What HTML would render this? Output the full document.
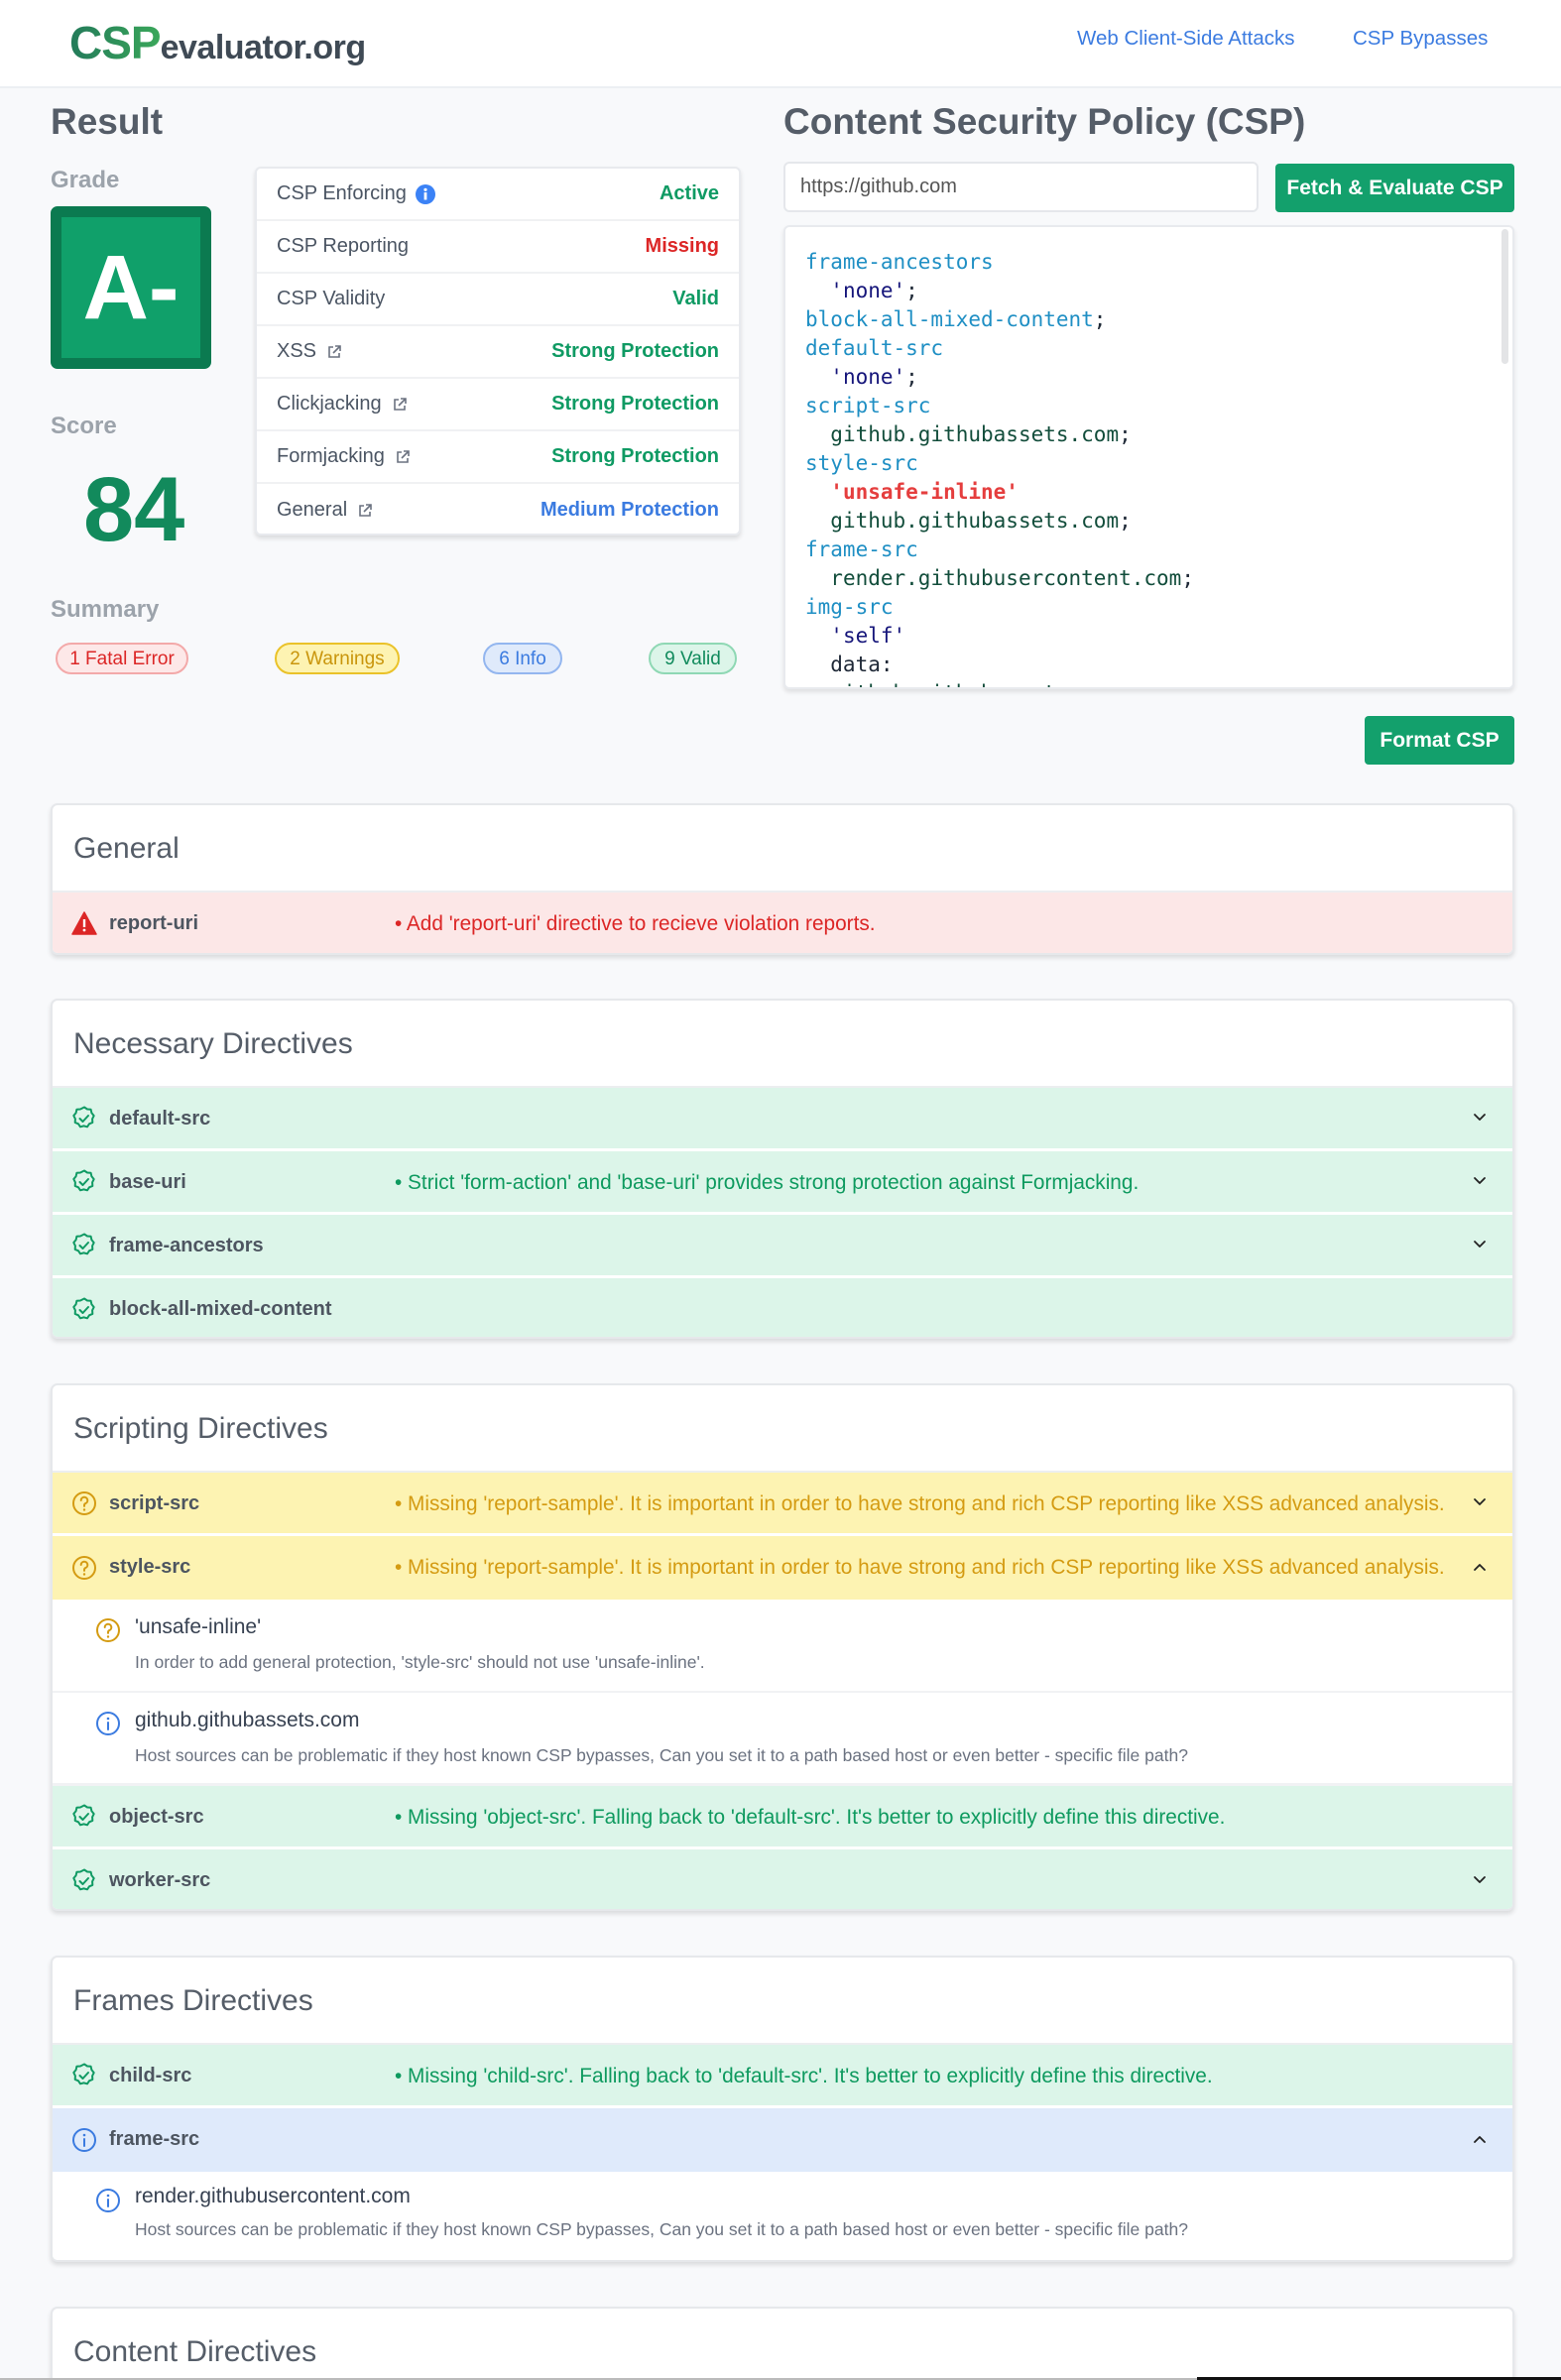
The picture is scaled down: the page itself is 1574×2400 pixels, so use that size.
<!DOCTYPE html>
<html style="height:2400px;overflow:hidden"><head><meta charset="utf-8"><style>
*{box-sizing:border-box;margin:0;padding:0}
body{width:1574px;height:2400px;overflow:hidden;background:#f8f9fb;font-family:"Liberation Sans",Arial,sans-serif;position:relative;color:#4b5563}
.abs{position:absolute}
header{position:absolute;left:0;top:0;width:1574px;height:89px;background:#fff;border-bottom:2px solid #eceff3}
.logo{left:70px;top:16px;font-weight:bold;white-space:nowrap}
.logo .c{font-size:46px;letter-spacing:-1px;background:linear-gradient(90deg,#237a5a,#3aa75a);-webkit-background-clip:text;color:transparent}
.logo .e{font-size:34px;color:#3f4a55;letter-spacing:-0.5px}
.nav{top:27px;font-size:20.5px;color:#3b7be0}
h1{position:absolute;font-size:37px;font-weight:bold;color:#555d68}
.lbl{position:absolute;font-size:24px;font-weight:bold;color:#9ca3ab}
.grade{left:51px;top:208px;width:162px;height:164px;background:#10a06a;border:11px solid #0b7a50;border-radius:7px;color:#fff;font-size:92px;font-weight:bold;text-align:center;line-height:142px}
.score{left:84px;top:462px;font-size:92px;font-weight:bold;color:#128a5c}
.badge{position:absolute;top:648px;height:32px;border-radius:16px;font-size:19px;line-height:29px;text-align:center;border:2px solid}
.tbl{left:257px;top:168px;width:490px;height:372px;background:#fff;border:2px solid #e8eaee;border-radius:6px;box-shadow:0 3px 5px rgba(0,0,0,.12)}
.tr{height:53px;border-bottom:2px solid #f0f1f3;display:flex;align-items:center;justify-content:space-between;padding:0 20px 0 20px;font-size:20px}
.tr:last-child{border-bottom:none}
.tr .v{font-weight:bold}
.ext{display:inline-block;vertical-align:middle;margin-left:10px}
input{position:absolute;left:790px;top:163px;width:479px;height:51px;border:2px solid #e5e7eb;border-radius:6px;font-family:inherit;font-size:20px;padding-left:15px;color:#555;background:#fff}
.btn{position:absolute;background:#13a06c;color:#fff;font-size:21px;font-weight:bold;border-radius:4px;text-align:center}
.code{left:790px;top:227px;width:737px;height:468px;background:#fff;border:2px solid #e8eaee;border-radius:6px;box-shadow:0 3px 5px rgba(0,0,0,.1);overflow:hidden;padding:21px 0 0 20px;font-family:"DejaVu Sans Mono","Liberation Mono",monospace;font-size:21px;line-height:29px;white-space:pre;color:#1f2937}
.k{color:#1f8fc4}.q{color:#15157a}.r{color:#e53e3e;font-weight:bold}.g{color:#124d3b}
.sb{position:absolute;right:4px;top:2px;width:7px;height:136px;background:#e3e4e6;border-radius:4px}
.card{position:absolute;left:51px;width:1476px;background:#fff;border:2px solid #e6e8eb;border-radius:7px;box-shadow:0 3px 5px rgba(0,0,0,.12);overflow:hidden}
.ch{height:88px;padding-left:21px;font-size:30px;color:#555d68;line-height:88px;border-bottom:2px solid #eceef0}
.row{position:relative;height:64px;border-bottom:3px solid #fff;font-size:20px}
.row:last-child{border-bottom:none}
.row .ic{position:absolute;left:19px;top:50%;margin-top:-13px}
.row .n{position:absolute;left:57px;top:0;line-height:62px;font-weight:bold;color:#4d5560}
.row .m{position:absolute;left:345px;top:0;line-height:64px;white-space:nowrap;font-size:20.8px}
.row .cv{position:absolute;right:26px;top:50%;margin-top:-7px}
.G{background:#dcf5e9}.G .m{color:#0e9a5f}
.Y{background:#fdf3b2}.Y .m{color:#d49b12}
.P{background:#fce7e7}.P .m{color:#dc2626}
.B{background:#dfeafb}
.sub{position:relative;background:#fff;border-bottom:2px solid #f1f2f4}
.sub .ic{position:absolute;left:43px;top:18px}
.sub .t{position:absolute;left:83px;top:16px;font-size:21px;color:#374151}
.sub .d{position:absolute;left:83px;top:53px;font-size:17.5px;color:#6b7280;white-space:nowrap}
</style></head><body>
<header>
<div class="abs logo"><span class="c">CSP</span><span class="e">evaluator.org</span></div>
<div class="abs nav" style="left:1086px">Web Client-Side Attacks</div>
<div class="abs nav" style="left:1364px">CSP Bypasses</div>
</header>

<h1 style="left:51px;top:102px">Result</h1>
<div class="lbl" style="left:51px;top:168px">Grade</div>
<div class="abs grade">A-</div>
<div class="lbl" style="left:51px;top:416px">Score</div>
<div class="abs score">84</div>
<div class="lbl" style="left:51px;top:601px">Summary</div>
<div class="badge" style="left:56px;width:134px;background:#fde8e8;border-color:#f3a9a9;color:#dc2626">1 Fatal Error</div>
<div class="badge" style="left:277px;width:126px;background:#fdf3b2;border-color:#eac229;color:#c9950c">2 Warnings</div>
<div class="badge" style="left:487px;width:80px;background:#dfeafb;border-color:#93b6ef;color:#3b7be0">6 Info</div>
<div class="badge" style="left:654px;width:89px;background:#dcf5e9;border-color:#8fd8b4;color:#108a5c">9 Valid</div>

<div class="abs tbl">
<div class="tr"><span>CSP Enforcing <svg class="ext" style="margin-left:4px" width="20" height="20" viewBox="0 0 20 20"><circle cx="10" cy="10" r="10" fill="#3b82f6"/><rect x="8.6" y="8" width="2.8" height="7.5" fill="#fff"/><circle cx="10" cy="5.3" r="1.6" fill="#fff"/></svg></span><span class="v" style="color:#0f9a63">Active</span></div>
<div class="tr"><span>CSP Reporting</span><span class="v" style="color:#dc2626">Missing</span></div>
<div class="tr"><span>CSP Validity</span><span class="v" style="color:#0f9a63">Valid</span></div>
<div class="tr"><span>XSS<svg class="ext" width="16" height="16" viewBox="0 0 16 16" fill="none" stroke="#6b7280" stroke-width="1.6"><path d="M7 3H3v10h10V9M9 2h5v5M14 2L7 9"/></svg></span><span class="v" style="color:#0f9a63">Strong Protection</span></div>
<div class="tr"><span>Clickjacking<svg class="ext" width="16" height="16" viewBox="0 0 16 16" fill="none" stroke="#6b7280" stroke-width="1.6"><path d="M7 3H3v10h10V9M9 2h5v5M14 2L7 9"/></svg></span><span class="v" style="color:#0f9a63">Strong Protection</span></div>
<div class="tr"><span>Formjacking<svg class="ext" width="16" height="16" viewBox="0 0 16 16" fill="none" stroke="#6b7280" stroke-width="1.6"><path d="M7 3H3v10h10V9M9 2h5v5M14 2L7 9"/></svg></span><span class="v" style="color:#0f9a63">Strong Protection</span></div>
<div class="tr"><span>General<svg class="ext" width="16" height="16" viewBox="0 0 16 16" fill="none" stroke="#6b7280" stroke-width="1.6"><path d="M7 3H3v10h10V9M9 2h5v5M14 2L7 9"/></svg></span><span class="v" style="color:#3b7be0">Medium Protection</span></div>
</div>

<h1 style="left:790px;top:102px">Content Security Policy (CSP)</h1>
<input value="https://github.com">
<div class="btn" style="left:1286px;top:165px;width:241px;height:49px;line-height:49px">Fetch &amp; Evaluate CSP</div>
<div class="abs code"><div class="sb"></div><span class="k">frame-ancestors</span>
  <span class="q">'none'</span>;
<span class="k">block-all-mixed-content</span>;
<span class="k">default-src</span>
  <span class="q">'none'</span>;
<span class="k">script-src</span>
  <span class="g">github.githubassets.com</span>;
<span class="k">style-src</span>
  <span class="r">'unsafe-inline'</span>
  <span class="g">github.githubassets.com</span>;
<span class="k">frame-src</span>
  <span class="g">render.githubusercontent.com</span>;
<span class="k">img-src</span>
  <span class="q">'self'</span>
  data:
  <span class="g">github.githubassets.com</span></div>
<div class="btn" style="left:1376px;top:722px;width:151px;height:49px;line-height:49px">Format CSP</div>

<svg width="0" height="0" style="position:absolute"><defs>
<g id="chk"><path d="M13 1.5l3 2 3.6.3.8 3.5 2.3 2.8-1.6 3.2.2 3.6-3.3 1.4-2 3-3.5-.9-3.5.9-2-3-3.3-1.4.2-3.6L2.3 10l2.3-2.8.8-3.5L9 3.5z" fill="none" stroke="#0f9a63" stroke-width="2" stroke-linejoin="round"/><path d="M8.5 13l3 3 5.5-6" fill="none" stroke="#0f9a63" stroke-width="2" stroke-linecap="round" stroke-linejoin="round"/></g>
<g id="qst"><circle cx="13" cy="13" r="11" fill="none" stroke="#d49b12" stroke-width="2"/><path d="M9.7 10a3.3 3.3 0 1 1 4.5 3.1c-.9.4-1.2 1-1.2 2v.8" fill="none" stroke="#d49b12" stroke-width="2" stroke-linecap="round"/><circle cx="13" cy="19.5" r="1.2" fill="#d49b12"/></g>
<g id="inf"><circle cx="13" cy="13" r="11" fill="none" stroke="#3b7be0" stroke-width="2"/><path d="M13 12v7" stroke="#3b7be0" stroke-width="2" stroke-linecap="round"/><circle cx="13" cy="8" r="1.3" fill="#3b7be0"/></g>
<g id="dn"><path d="M2 3l5 5 5-5" fill="none" stroke="#222" stroke-width="1.8" stroke-linecap="round" stroke-linejoin="round"/></g>
<g id="up"><path d="M2 9l5-5 5 5" fill="none" stroke="#222" stroke-width="1.8" stroke-linecap="round" stroke-linejoin="round"/></g>
</defs></svg>

<div class="card" style="top:810px;height:153px">
<div class="ch">General</div>
<div class="row P" style="height:62px"><svg class="ic" width="26" height="26" viewBox="0 0 26 26"><path d="M13 2L25 24H1z" fill="#dc2626" stroke="#dc2626" stroke-width="1.5" stroke-linejoin="round"/><rect x="11.8" y="9" width="2.4" height="8" fill="#fff"/><circle cx="13" cy="20" r="1.4" fill="#fff"/></svg><span class="n">report-uri</span><span class="m">• Add 'report-uri' directive to recieve violation reports.</span></div>
</div>

<div class="card" style="top:1007px;height:343px">
<div class="ch">Necessary Directives</div>
<div class="row G"><svg class="ic" width="26" height="26" viewBox="0 0 26 26"><use href="#chk"/></svg><span class="n">default-src</span><svg class="cv" width="14" height="12" viewBox="0 0 14 12"><use href="#dn"/></svg></div>
<div class="row G"><svg class="ic" width="26" height="26" viewBox="0 0 26 26"><use href="#chk"/></svg><span class="n">base-uri</span><span class="m">• Strict 'form-action' and 'base-uri' provides strong protection against Formjacking.</span><svg class="cv" width="14" height="12" viewBox="0 0 14 12"><use href="#dn"/></svg></div>
<div class="row G"><svg class="ic" width="26" height="26" viewBox="0 0 26 26"><use href="#chk"/></svg><span class="n">frame-ancestors</span><svg class="cv" width="14" height="12" viewBox="0 0 14 12"><use href="#dn"/></svg></div>
<div class="row G"><svg class="ic" width="26" height="26" viewBox="0 0 26 26"><use href="#chk"/></svg><span class="n">block-all-mixed-content</span></div>
</div>

<div class="card" style="top:1395px;height:532px">
<div class="ch">Scripting Directives</div>
<div class="row Y"><svg class="ic" width="26" height="26" viewBox="0 0 26 26"><use href="#qst"/></svg><span class="n">script-src</span><span class="m">• Missing 'report-sample'. It is important in order to have strong and rich CSP reporting like XSS advanced analysis.</span><svg class="cv" width="14" height="12" viewBox="0 0 14 12"><use href="#dn"/></svg></div>
<div class="row Y" style="border-bottom:none"><svg class="ic" width="26" height="26" viewBox="0 0 26 26"><use href="#qst"/></svg><span class="n">style-src</span><span class="m">• Missing 'report-sample'. It is important in order to have strong and rich CSP reporting like XSS advanced analysis.</span><svg class="cv" width="14" height="12" viewBox="0 0 14 12"><use href="#up"/></svg></div>
<div class="sub" style="height:94px"><svg class="ic" width="26" height="26" viewBox="0 0 26 26"><use href="#qst"/></svg><span class="t">'unsafe-inline'</span><span class="d">In order to add general protection, 'style-src' should not use 'unsafe-inline'.</span></div>
<div class="sub" style="height:94px;border-bottom:3px solid #f1f2f4"><svg class="ic" width="26" height="26" viewBox="0 0 26 26"><use href="#inf"/></svg><span class="t">github.githubassets.com</span><span class="d">Host sources can be problematic if they host known CSP bypasses, Can you set it to a path based host or even better - specific file path?</span></div>
<div class="row G"><svg class="ic" width="26" height="26" viewBox="0 0 26 26"><use href="#chk"/></svg><span class="n">object-src</span><span class="m">• Missing 'object-src'. Falling back to 'default-src'. It's better to explicitly define this directive.</span></div>
<div class="row G"><svg class="ic" width="26" height="26" viewBox="0 0 26 26"><use href="#chk"/></svg><span class="n">worker-src</span><svg class="cv" width="14" height="12" viewBox="0 0 14 12"><use href="#dn"/></svg></div>
</div>

<div class="card" style="top:1972px;height:309px">
<div class="ch">Frames Directives</div>
<div class="row G"><svg class="ic" width="26" height="26" viewBox="0 0 26 26"><use href="#chk"/></svg><span class="n">child-src</span><span class="m">• Missing 'child-src'. Falling back to 'default-src'. It's better to explicitly define this directive.</span></div>
<div class="row B" style="border-bottom:none"><svg class="ic" width="26" height="26" viewBox="0 0 26 26"><use href="#inf"/></svg><span class="n">frame-src</span><svg class="cv" width="14" height="12" viewBox="0 0 14 12"><use href="#up"/></svg></div>
<div class="sub" style="height:93px;border-bottom:none"><svg class="ic" width="26" height="26" viewBox="0 0 26 26" style="top:16px"><use href="#inf"/></svg><span class="t" style="top:13px">render.githubusercontent.com</span><span class="d" style="top:48px">Host sources can be problematic if they host known CSP bypasses, Can you set it to a path based host or even better - specific file path?</span></div>
</div>

<div class="card" style="top:2326px;height:90px;border-bottom:none;border-radius:7px 7px 0 0">
<div class="ch" style="border-bottom:none">Content Directives</div>
</div>
<div class="abs" style="left:1207px;top:2397px;width:367px;height:3px;background:#111"></div>
<div class="abs" style="left:0;top:2398px;width:1207px;height:2px;background:#bbb"></div>
</body></html>
